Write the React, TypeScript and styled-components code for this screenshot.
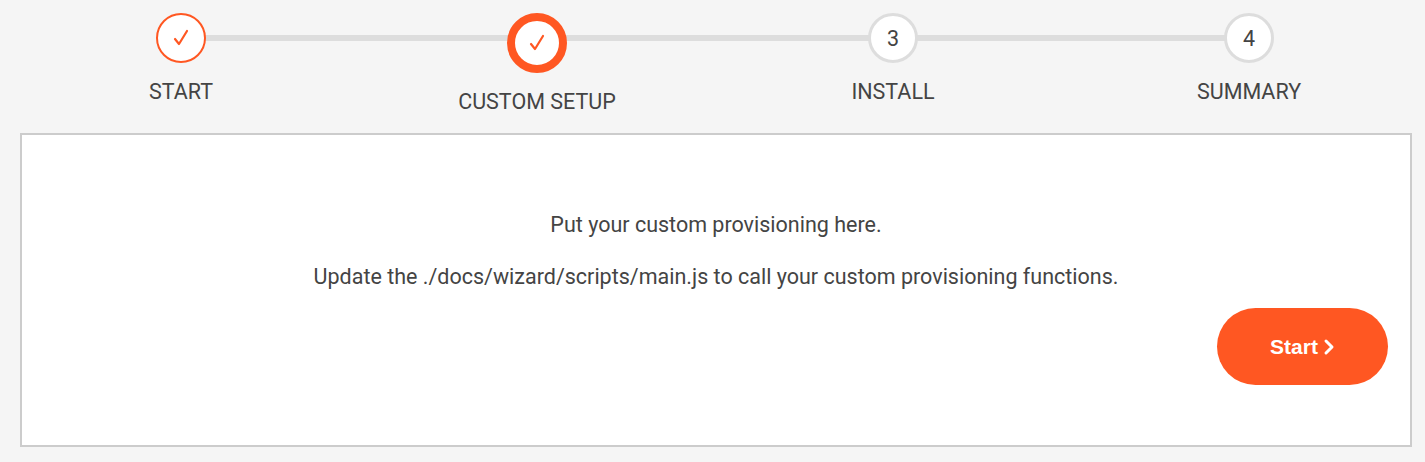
import styled, { createGlobalStyle } from "styled-components";

const GlobalStyle = createGlobalStyle`
  html, body {
    margin: 0;
    padding: 0;
    background: #f5f5f5;
    font-family: Roboto, "Liberation Sans", sans-serif;
    color: #444;
  }
`;

const Page = styled.div`
  width: 1425px;
  height: 462px;
  background: #f5f5f5;
  display: flex;
  flex-direction: column;
`;

const Stepper = styled.div`
  position: relative;
  display: grid;
  grid-template-columns: repeat(4, 356px);
  margin-left: 3px;
  padding-top: 13px;
  height: 133px;
  box-sizing: border-box;
`;

// the gray track behind the circles
const Track = styled.div`
  position: absolute;
  top: 35px;
  left: 178px;
  width: 1068px;
  height: 6px;
  background: #dddddd;
`;

const Step = styled.div`
  position: relative;
  display: flex;
  flex-direction: column;
  align-items: center;
`;

const Circle = styled.div<{ $done?: boolean; $active?: boolean }>`
  width: ${(p) => (p.$active ? 60 : 50)}px;
  height: ${(p) => (p.$active ? 60 : 50)}px;
  box-sizing: border-box;
  border-radius: 50%;
  background: #fff;
  border: ${(p) =>
    p.$active ? "8px solid #ff5722" : p.$done ? "2px solid #ff5722" : "3px solid #dddddd"};
  display: flex;
  align-items: center;
  justify-content: center;
  font-size: 21.5px;
  color: ${(p) => (p.$done ? "#ff5722" : "#444")};
`;

const Check = styled.svg`
  width: 16px;
  height: 18px;
`;

const Label = styled.div`
  margin-top: 16px;
  font-size: 21.5px;
  line-height: 26px;
  color: #444;
`;

const Card = styled.div`
  margin: 0 13px 0 20px;
  height: 314px;
  box-sizing: border-box;
  background: #fff;
  border: 2px solid #cccccc;
  display: flex;
  flex-direction: column;
  align-items: center;
  padding: 77px 22px 0 22px;
`;

const Text = styled.p`
  margin: 0 0 26px 0;
  font-size: 21.5px;
  line-height: 26px;
  color: #444;
  text-align: center;
`;

const Actions = styled.div`
  align-self: stretch;
  display: flex;
  justify-content: flex-end;
  margin-top: -8px;
`;

const Button = styled.button`
  width: 171px;
  height: 77px;
  border: none;
  border-radius: 39px;
  background: #ff5722;
  color: #fff;
  font-family: "Liberation Sans", Arial, sans-serif;
  font-weight: 700;
  font-size: 21px;
  display: flex;
  align-items: center;
  justify-content: center;
  gap: 5px;
  cursor: pointer;
`;

const steps = [
  { label: "START", done: true },
  { label: "CUSTOM SETUP", done: true, active: true },
  { label: "INSTALL", num: 3 },
  { label: "SUMMARY", num: 4 },
];

const CheckIcon = () => (
  <Check viewBox="0 0 16 18">
    <path d="M2 10 L6 15 L14 2" fill="none" stroke="#ff5722" strokeWidth="2.2" strokeLinecap="round" strokeLinejoin="round" />
  </Check>
);

export default function App() {
  return (
    <>
      <GlobalStyle />
      <Page>
        <Stepper>
          <Track />
          {steps.map((s) => (
            <Step key={s.label}>
              <Circle $done={s.done} $active={s.active}>
                {s.done ? <CheckIcon /> : s.num}
              </Circle>
              <Label>{s.label}</Label>
            </Step>
          ))}
        </Stepper>
        <Card>
          <Text>Put your custom provisioning here.</Text>
          <Text>Update the ./docs/wizard/scripts/main.js to call your custom provisioning functions.</Text>
          <Actions>
            <Button>
              Start
              <svg width="12" height="18" viewBox="0 0 12 18">
                <path d="M3 3 L9 9 L3 15" fill="none" stroke="#fff" strokeWidth="3" strokeLinecap="round" strokeLinejoin="round" />
              </svg>
            </Button>
          </Actions>
        </Card>
      </Page>
    </>
  );
}
